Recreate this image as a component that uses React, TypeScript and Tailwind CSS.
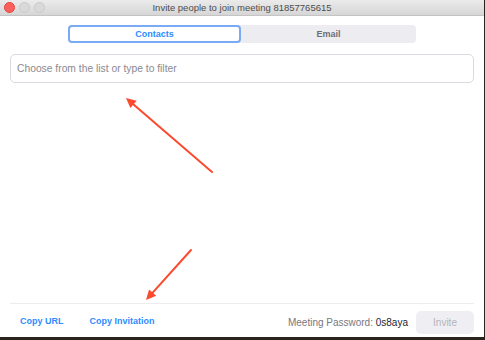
import React from 'react';

const font = { fontFamily: '"Helvetica Neue", "Liberation Sans", Arial, sans-serif' };

function Arrow({ x1, y1, x2, y2 }: { x1: number; y1: number; x2: number; y2: number }) {
  // arrowhead at (x2, y2)
  const ang = Math.atan2(y2 - y1, x2 - x1);
  const len = 11;
  const w = 0.45;
  const ax = x2 - len * Math.cos(ang - w);
  const ay = y2 - len * Math.sin(ang - w);
  const bx = x2 - len * Math.cos(ang + w);
  const by = y2 - len * Math.sin(ang + w);
  const sx = x2 - 8 * Math.cos(ang);
  const sy = y2 - 8 * Math.sin(ang);
  return (
    <g>
      <line x1={x1} y1={y1} x2={sx} y2={sy} stroke="#fb4a2e" strokeWidth={2} strokeLinecap="round" />
      <polygon points={`${x2},${y2} ${ax},${ay} ${bx},${by}`} fill="#fb4a2e" />
    </g>
  );
}

export default function App() {
  return (
    <div className="w-[485px] h-[340px] bg-[#2a241c] overflow-hidden relative" style={font}>
      <div className="w-[484px] h-[337px] bg-white flex flex-col">
        {/* title bar */}
        <div className="h-[16px] relative flex items-center justify-center bg-gradient-to-b from-[#ebebeb] to-[#d6d6d6] border-b border-[#c4c4c4]">
          <div className="absolute left-[4px] top-[2px] flex gap-[4px]">
            <span className="w-[11px] h-[11px] rounded-full bg-[#fc605c] border border-[#e0443e]" />
            <span className="w-[11px] h-[11px] rounded-full bg-[#d9d9d9] border border-[#cacaca]" />
            <span className="w-[11px] h-[11px] rounded-full bg-[#d9d9d9] border border-[#cacaca]" />
          </div>
          <span className="text-[9.5px] text-[#4d4d4d] leading-none">Invite people to join meeting 81857765615</span>
        </div>

        {/* tabs */}
        <div className="flex justify-center mt-[9px]">
          <div className="flex w-[348px] h-[18px] rounded-[4px] bg-[#ececf1]">
            <div className="w-[173px] h-full pt-[1px] rounded-[4px] border-2 border-[#7aaaf6] bg-white flex items-center justify-center text-[9px] font-bold text-[#2d8cff]">
              Contacts
            </div>
            <div className="flex-1 pt-[1px] flex items-center justify-center text-[9px] font-bold text-[#6e6e78]">
              Email
            </div>
          </div>
        </div>

        {/* filter input */}
        <div className="mx-[10px] mt-[11px] h-[29px] rounded-[5px] border border-[#d9d9e1] flex items-center px-[6px]">
          <span className="text-[10.3px] text-[#8a8a92]">Choose from the list or type to filter</span>
        </div>

        <div className="flex-1" />

        {/* footer */}
        <div className="mx-[10px] border-t border-[#ececf0]" />
        <div className="h-[33px] pt-[3px] flex items-center pl-[20px] pr-[10px]">
          <span className="text-[9px] font-bold text-[#2d8cff]">Copy URL</span>
          <span className="ml-[26px] text-[9px] font-bold text-[#2d8cff]">Copy Invitation</span>
          <span className="ml-auto text-[10px] text-[#77777f]">
            Meeting Password: <span className="text-[#232333]">0s8aya</span>
          </span>
          <div className="ml-[8px] w-[58px] h-[23px] rounded-[5px] bg-[#efeff3] flex items-center justify-center text-[10px] text-[#b3b3bb]">
            Invite
          </div>
        </div>
      </div>

      <svg className="absolute left-0 top-0 pointer-events-none" width={485} height={340}>
        <Arrow x1={212} y1={172} x2={126} y2={98} />
        <Arrow x1={191} y1={250} x2={146} y2={300} />
      </svg>
    </div>
  );
}
